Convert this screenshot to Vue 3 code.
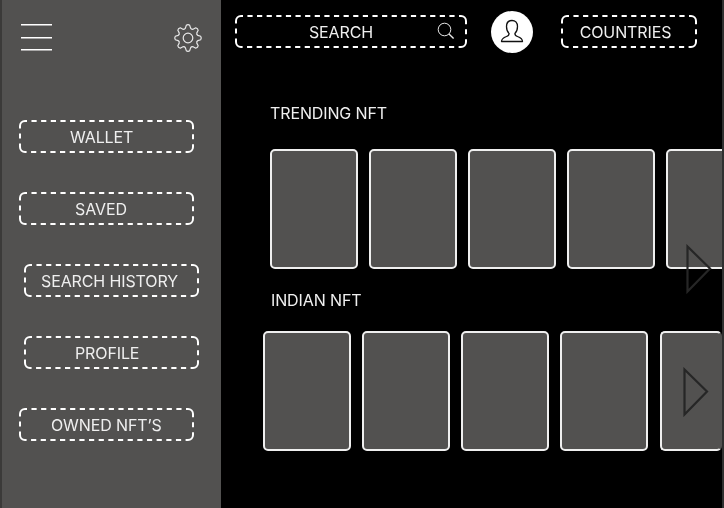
<script setup>
const navItems = [
  { label: 'WALLET', left: 51, shifted: false },
  { label: 'SAVED', left: 56, shifted: false },
  { label: 'SEARCH HISTORY', left: 17, shifted: true },
  { label: 'PROFILE', left: 51, shifted: true },
  { label: 'OWNED NFT’S', left: 32, shifted: false }
]
const trending = [1, 2, 3, 4, 5]
const indian = [1, 2, 3, 4]

// Dash list with solid corners and one centred dash on each short side.
function dashes(width) {
  const arc = 7.854, topTail = 2, sideTail = 3, sideGap = 5, sideDash = 5, dash = 5.2
  const edge = width - 12
  const room = edge - topTail * 2
  const count = Math.round((room - 3.9) / 9.7)
  const gap = ((room - count * dash) / (count + 1)).toFixed(3)
  const corner = (topTail + arc + sideTail).toFixed(3)
  const run = []
  for (let i = 0; i < count; i++) run.push(gap, dash)
  run.push(gap)
  const side = [corner, sideGap, sideDash, sideGap, corner]
  return [topTail, ...run, ...side, ...run, corner, sideGap, sideDash, sideGap, (sideTail + arc).toFixed(3), 0].join(' ')
}

function buildGear() {
  const cx = 15, cy = 15, teeth = 8
  const outer = 13.4, inner = 9.9
  let d = ''
  for (let i = 0; i < teeth; i++) {
    const a = (i / teeth) * Math.PI * 2 - Math.PI / 2
    const step = (Math.PI * 2) / teeth
    const p = (r, t) => `${(cx + r * Math.cos(t)).toFixed(2)} ${(cy + r * Math.sin(t)).toFixed(2)}`
    d += (i === 0 ? 'M' : 'L') + p(outer - 0.6, a - step * 0.17)
    d += ' Q' + p(outer + 0.5, a) + ' ' + p(outer - 0.6, a + step * 0.17)
    d += ' L' + p(inner + 0.3, a + step * 0.33)
    d += ' Q' + p(inner - 0.9, a + step * 0.5) + ' ' + p(inner + 0.3, a + step * 0.67) + ' '
  }
  return d + 'Z'
}
const gearPath = buildGear()
</script>

<template>
  <div class="page">
    <aside class="sidebar">
      <div class="side-head">
        <div class="burger"><span></span><span></span><span></span></div>
        <svg class="gear" width="30" height="30" viewBox="0 0 30 30" fill="none" stroke="#e8e8e8" stroke-width="1.2">
          <path :d="gearPath" stroke-linejoin="round" />
          <circle cx="15" cy="15" r="4.8" />
        </svg>
      </div>
      <nav class="nav">
        <div v-for="item in navItems" :key="item.label" class="dash-box nav-item" :class="{ shifted: item.shifted }" :style="{ paddingLeft: item.left + 'px' }">
          <svg class="dash"><rect :style="{ strokeDasharray: dashes(175) }" /></svg>
          <span>{{ item.label }}</span>
        </div>
      </nav>
    </aside>

    <main class="main">
      <header class="topbar">
        <div class="dash-box search">
          <svg class="dash"><rect :style="{ strokeDasharray: dashes(232) }" /></svg>
          <span>SEARCH</span>
          <svg class="search-icon" width="18" height="18" viewBox="0 0 18 18" fill="none" stroke="#e8e8e8" stroke-width="1">
            <circle cx="7.500" cy="7.500" r="6.300" />
            <path d="M12 12l4.600 4.600" stroke-width="1.400" />
          </svg>
        </div>
        <div class="avatar">
          <svg width="24" height="24" viewBox="0 0 24 24" fill="none" stroke="#111" stroke-width="1.300">
            <path d="M1.500 22.500h21c0-3-2.200-4-5-5-2-.7-2.600-1.400-2.600-3 1.500-1.400 2.600-3.800 2.600-7C17.500 3.500 15.200 1.500 12 1.500S6.500 3.500 6.500 7.500c0 3.200 1.100 5.600 2.600 7 0 1.600-.6 2.300-2.600 3-2.800 1-5 2-5 5z" stroke-linejoin="round" />
          </svg>
        </div>
        <div class="dash-box countries">
          <svg class="dash"><rect :style="{ strokeDasharray: dashes(136) }" /></svg>
          <span>COUNTRIES</span>
        </div>
      </header>

      <section class="section trending">
        <h2 class="title">TRENDING NFT</h2>
        <div class="row">
          <div v-for="c in trending" :key="c" class="card"></div>
          <svg class="arrow" width="28" height="50" viewBox="0 0 28 50" fill="none">
            <path d="M2.500 2.500v45l22.500-23z" />
          </svg>
        </div>
      </section>

      <section class="section indian">
        <h2 class="title">INDIAN NFT</h2>
        <div class="row">
          <div v-for="c in indian" :key="c" class="card"></div>
          <div class="card last"></div>
          <svg class="arrow" width="28" height="50" viewBox="0 0 28 50" fill="none">
            <path d="M2.500 2.500v45l22.500-23z" />
          </svg>
        </div>
      </section>
    </main>
  </div>
</template>

<style>
html, body { margin: 0; background: #000; }
</style>

<style scoped>
.page {
  width: 724px;
  height: 508px;
  display: flex;
  overflow: hidden;
  background: #000;
  border-left: 2px solid #3b3a39;
  border-right: 2px solid #2f2f2f;
  box-sizing: border-box;
  font-family: Inter, "Liberation Sans", sans-serif;
  font-size: 16px;
  letter-spacing: -0.12px;
  color: #efefef;
}
.sidebar {
  width: 219px;
  flex: none;
  background: #525150;
  display: flex;
  flex-direction: column;
}
.side-head {
  display: flex;
  justify-content: space-between;
  align-items: flex-start;
  padding: 24px 18px 0 19px;
  height: 120px;
  box-sizing: border-box;
}
.burger {
  width: 31px;
  height: 26px;
  display: flex;
  flex-direction: column;
  justify-content: space-between;
}
.burger span { display: block; height: 1px; background: #fff; box-shadow: 0 .5px 0 #fff; }
.gear { margin-top: -1px; }
.nav { display: flex; flex-direction: column; gap: 39px; }
.dash-box {
  position: relative;
  height: 33px;
  display: flex;
  align-items: center;
  justify-content: center;
  line-height: 20px;
  box-sizing: border-box;
}
.dash-box span, .title { will-change: opacity; }
.dash {
  position: absolute;
  inset: 0;
  width: 100%;
  height: 100%;
  pointer-events: none;
}
.dash rect {
  x: 1px;
  y: 1px;
  width: calc(100% - 2px);
  height: calc(100% - 2px);
  rx: 5px;
  fill: none;
  stroke: #fff;
  stroke-width: 2px;
}
.nav-item { width: 175px; margin-left: 17px; justify-content: flex-start; }
.nav-item.shifted { margin-left: 22px; }
.main { flex: 1; min-width: 0; overflow: hidden; }
.topbar {
  display: flex;
  align-items: flex-start;
  padding: 11px 0 0 14px;
}
.search { width: 232px; margin-top: 4px; }
.search span { margin-right: 20px; }
.search-icon { position: absolute; right: 12px; top: 7px; }
.avatar {
  width: 42px;
  height: 42px;
  border-radius: 50%;
  background: #fff;
  margin-left: 24px;
  flex: none;
  display: flex;
  align-items: center;
  justify-content: center;
}
.avatar svg { margin-top: -2px; }
.countries { width: 136px; margin-left: 28px; margin-top: 4px; }
.countries span { margin-right: 7px; }
.title {
  margin: 0;
  font-size: 16px;
  font-weight: 400;
  line-height: 20px;
}
.trending { padding-top: 50px; }
.trending .title { margin-left: 49px; }
.trending .row { margin-left: 49px; margin-top: 26px; }
.trending .arrow { top: 95px; left: 415px; }
.indian { padding-top: 21px; }
.indian .title { margin-left: 50px; }
.indian .row { margin-left: 42px; margin-top: 21px; }
.indian .arrow { top: 36px; left: 419px; }
.row {
  position: relative;
  display: flex;
  gap: 11px;
  height: 120px;
}
.card {
  width: 88px;
  height: 120px;
  flex: none;
  box-sizing: border-box;
  background: #525150;
  border: 2px solid #efefef;
  border-radius: 5px;
}
.card.last { width: 62px; margin-left: 1px; border-right-color: #525150; }
.arrow { position: absolute; }
.arrow path { stroke: #262626; stroke-width: 2.200; stroke-linejoin: miter; }
</style>
